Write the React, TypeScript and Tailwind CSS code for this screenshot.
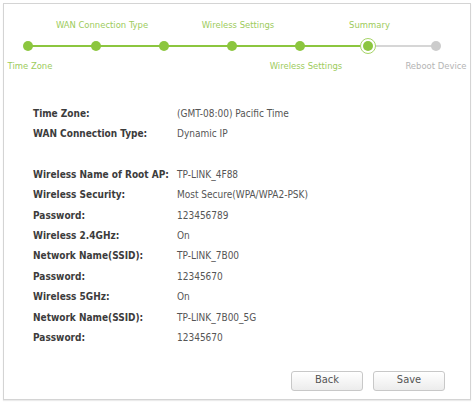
const steps = [
  { label: "Time Zone", pos: "below", state: "done", shift: "ml-[4px]" },
  { label: "WAN Connection Type", pos: "above", state: "done", shift: "ml-[12px]" },
  { label: "", pos: "below", state: "done", shift: "" },
  { label: "Wireless Settings", pos: "above", state: "done", shift: "ml-[12px]" },
  { label: "Wireless Settings", pos: "below", state: "done", shift: "ml-[12px]" },
  { label: "Summary", pos: "above", state: "current", shift: "ml-[3px]" },
  { label: "Reboot Device", pos: "below", state: "todo", shift: "" },
];

const rows: [string, string][] = [
  ["Time Zone:", "(GMT-08:00) Pacific Time"],
  ["WAN Connection Type:", "Dynamic IP"],
  ["", ""],
  ["Wireless Name of Root AP:", "TP-LINK_4F88"],
  ["Wireless Security:", "Most Secure(WPA/WPA2-PSK)"],
  ["Password:", "123456789"],
  ["Wireless 2.4GHz:", "On"],
  ["Network Name(SSID):", "TP-LINK_7B00"],
  ["Password:", "12345670"],
  ["Wireless 5GHz:", "On"],
  ["Network Name(SSID):", "TP-LINK_7B00_5G"],
  ["Password:", "12345670"],
];

const Dot = ({ state }: { state: string }) => {
  if (state === "current") {
    return (
      <span className="w-[16px] h-[16px] rounded-full border border-[#a6d466] bg-white flex items-center justify-center">
        <span className="block w-[10px] h-[10px] rounded-full bg-[#8cc63f]" />
      </span>
    );
  }
  return (
    <span
      className={
        state === "todo"
          ? "block w-[10px] h-[10px] rounded-full bg-[#cccccc]"
          : "block w-[10px] h-[10px] rounded-full bg-[#8cc63f]"
      }
    />
  );
};

const App = () => {
  return (
    <div className="w-[474px] h-[403px] bg-white p-[3px] font-['DejaVu_Sans_Condensed','Liberation_Sans',sans-serif]">
      <div className="h-full border border-[#d4d4d4] shadow-[0_1px_1px_rgba(0,0,0,0.08)]">
        <div className="flex ml-[-10px] mt-[13px]">
          {steps.map((s, i) => (
            <div key={i} className="w-[68px] flex flex-col items-center">
              <div className={`h-[18px] text-[9.4px] text-[#9dcb5c] whitespace-nowrap leading-[16px] ${s.shift}`}>
                {s.pos === "above" ? s.label : ""}
              </div>
              <div className="relative w-full h-[22px] flex items-center justify-center">
                {i > 0 && (
                  <span
                    className={
                      s.state === "todo"
                        ? "absolute left-0 w-1/2 top-[10px] h-[2px] bg-[#d6d6d6]"
                        : "absolute left-0 w-1/2 top-[10px] h-[2px] bg-[#8cc63f]"
                    }
                  />
                )}
                {i < steps.length - 1 && (
                  <span
                    className={
                      steps[i + 1].state === "todo"
                        ? "absolute right-0 w-1/2 top-[10px] h-[2px] bg-[#d6d6d6]"
                        : "absolute right-0 w-1/2 top-[10px] h-[2px] bg-[#8cc63f]"
                    }
                  />
                )}
                <span className="relative">
                  <Dot state={s.state} />
                </span>
              </div>
              <div
                className={
                  s.state === "todo"
                    ? `h-[18px] text-[9.4px] text-[#b4b4b4] whitespace-nowrap leading-[18px] ${s.shift}`
                    : `h-[18px] text-[9.4px] text-[#9dcb5c] whitespace-nowrap leading-[18px] ${s.shift}`
                }
              >
                {s.pos === "below" ? s.label : ""}
              </div>
            </div>
          ))}
        </div>

        <div className="mt-[28px] ml-[29px] text-[10px]">
          {rows.map(([k, v], i) => (
            <div key={i} className="flex h-[20.4px] items-center whitespace-nowrap">
              <div className="w-[144px] font-bold text-[#3c3c3c]">{k}</div>
              <div className="text-[#555555]">{v}</div>
            </div>
          ))}
        </div>

        <div className="flex justify-end gap-[10px] mr-[25px] mt-[23px]">
          <button className="w-[72px] h-[20px] rounded-[3px] border border-[#c8c8c8] bg-gradient-to-b from-white to-[#ececec] text-[11px] text-[#555555]">
            Back
          </button>
          <button className="w-[72px] h-[20px] rounded-[3px] border border-[#c8c8c8] bg-gradient-to-b from-white to-[#ececec] text-[11px] text-[#555555]">
            Save
          </button>
        </div>
      </div>
    </div>
  );
};

export default App;
